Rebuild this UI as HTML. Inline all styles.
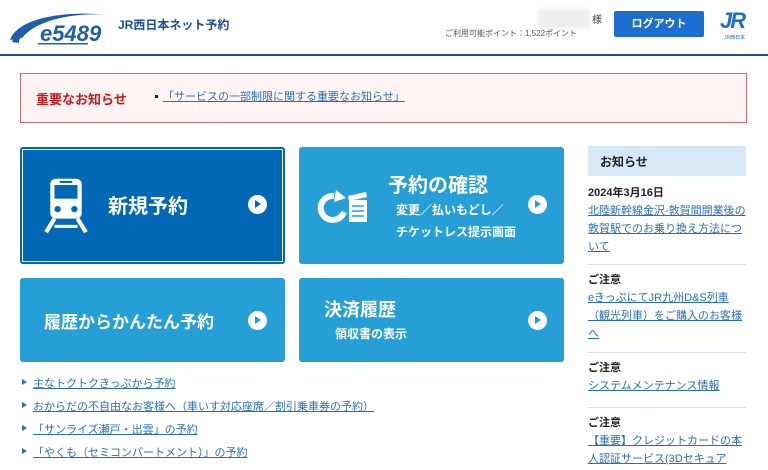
<!DOCTYPE html>
<html><head><meta charset="utf-8"><style>
*{margin:0;padding:0;box-sizing:border-box}
body{width:768px;height:470px;overflow:hidden;background:#fff;font-family:"Liberation Sans","Noto Sans CJK JP",sans-serif;position:relative;color:#222}
.a{position:absolute}
a{color:#2a6fb8;text-decoration:underline}
.btn{position:absolute;border-radius:3px;color:#fff;font-weight:bold}
.play{position:absolute;width:19px;height:19px;border-radius:50%;background:#fff}
.play:after{content:"";position:absolute;left:7px;top:5px;border-left:6px solid #259fd5;border-top:4.5px solid transparent;border-bottom:4.5px solid transparent}
.play.d:after{border-left-color:#0068b7}
.lk{position:absolute;left:22px;font-size:11px}
.lk:before{content:"";position:absolute;left:0;top:4px;border-left:5px solid #2a6fb8;border-top:3.5px solid transparent;border-bottom:3.5px solid transparent}
.lk a{margin-left:11px}
.sd{position:absolute;left:588px;width:160px;font-size:11px;line-height:18px}
.sd b{display:block;font-size:11px;color:#222}
.hr{position:absolute;left:588px;width:158px;height:1px;background:#ddd}
</style></head><body>
<svg class="a" style="left:8px;top:8px" width="110" height="38" viewBox="0 0 110 38">
<path d="M2 32 C10 10 55 2 104 7 C72 4 30 10 14 30 Z" fill="#1d5fae"/>
<path d="M4 34 C8 22 20 16 32 13 C18 20 11 28 11 35 Z" fill="#1d5fae"/>
<text x="32" y="33" font-family="Liberation Sans" font-style="italic" font-weight="bold" font-size="22" fill="#1d5fae">e5489</text>
<rect x="30" y="35" width="50" height="1.5" fill="#1d5fae"/>
</svg>
<div class="a" style="left:118px;top:16px;font-size:12px;color:#1d4f9a;font-weight:bold">JR西日本ネット予約</div>
<div class="a" style="left:538px;top:9px;width:52px;height:20px;background:#eee;filter:blur(2px)"></div>
<div class="a" style="left:592px;top:11px;font-size:10px;color:#444">様</div>
<div class="a" style="left:445px;top:28px;font-size:8px;color:#555">ご利用可能ポイント：1,522ポイント</div>
<div class="a" style="left:614px;top:11px;width:90px;height:26px;background:#1c6fd0;border-radius:2px;color:#fff;font-size:11px;font-weight:bold;text-align:center;line-height:26px">ログアウト</div>
<div class="a" style="left:720px;top:8px;font-size:22px;font-weight:bold;color:#1d6fc4;font-style:italic;letter-spacing:-2px">JR</div>
<div class="a" style="left:724px;top:34px;font-size:5px;color:#1d6fc4">JR西日本</div>
<div class="a" style="left:0;top:54px;width:768px;height:2px;background:#1f4c91"></div>
<div class="a" style="left:20px;top:73px;width:727px;height:50px;background:#fdf4f3;border:1px solid #d46a6a"></div>
<div class="a" style="left:36px;top:89px;font-size:13px;font-weight:bold;color:#c81a1a">重要なお知らせ</div>
<div class="a" style="left:155px;top:95px;width:3px;height:3px;background:#222"></div>
<div class="a" style="left:163px;top:88px;font-size:11px"><a>「サービスの一部制限に関する重要なお知らせ」</a></div>

<div class="btn" style="left:20px;top:147px;width:265px;height:117px;background:#0068b7;box-shadow:inset 0 0 0 2px #0068b7,inset 0 0 0 3px #fff"></div>
<svg class="a" style="left:44px;top:178px" width="44" height="56" viewBox="0 0 42 52"><rect x="6" y="0" width="30" height="38" rx="5" fill="#fff"/><rect x="10" y="6" width="22" height="13" fill="#0068b7"/><rect x="15" y="2" width="12" height="2" fill="#0068b7"/><circle cx="13" cy="29" r="3" fill="#0068b7"/><circle cx="29" cy="29" r="3" fill="#0068b7"/><path d="M10 38 L2 51 M32 38 L40 51" stroke="#fff" stroke-width="4"/><rect x="10" y="44" width="22" height="3" fill="#fff"/></svg>
<div class="a" style="left:108px;top:190px;font-size:20px;font-weight:bold;color:#fff">新規予約</div>
<div class="play d" style="left:248px;top:195px"></div>

<div class="btn" style="left:299px;top:147px;width:265px;height:117px;background:#259fd5"></div>
<svg class="a" style="left:316px;top:190px" width="55" height="36" viewBox="0 0 55 36"><path d="M18 6 A12 12 0 1 0 28 22" stroke="#fff" stroke-width="6" fill="none"/><path d="M20 0 L30 8 L18 12 Z" fill="#fff"/><rect x="33" y="10" width="18" height="22" fill="#fff"/><path d="M32 6 L50 2 L51 7 L33 11 Z" fill="#fff"/><path d="M36 16h12M36 21h12M36 26h12" stroke="#259fd5" stroke-width="1.5"/></svg>
<div class="a" style="left:388px;top:169px;font-size:20px;font-weight:bold;color:#fff">予約の確認</div>
<div class="a" style="left:396px;top:201px;font-size:12px;font-weight:bold;color:#fff">変更／払いもどし／</div>
<div class="a" style="left:396px;top:223px;font-size:12px;font-weight:bold;color:#fff">チケットレス提示画面</div>
<div class="play" style="left:528px;top:195px"></div>

<div class="btn" style="left:20px;top:278px;width:265px;height:84px;background:#259fd5"></div>
<div class="a" style="left:44px;top:308px;font-size:17px;font-weight:bold;color:#fff">履歴からかんたん予約</div>
<div class="play" style="left:248px;top:311px"></div>
<div class="btn" style="left:299px;top:278px;width:265px;height:84px;background:#259fd5"></div>
<div class="a" style="left:324px;top:296px;font-size:18px;font-weight:bold;color:#fff">決済履歴</div>
<div class="a" style="left:335px;top:325px;font-size:12px;font-weight:bold;color:#fff">領収書の表示</div>
<div class="play" style="left:528px;top:311px"></div>

<div class="lk" style="top:375px"><a>主なトクトクきっぷから予約</a></div>
<div class="lk" style="top:398px"><a>おからだの不自由なお客様へ（車いす対応座席／割引乗車券の予約）</a></div>
<div class="lk" style="top:421px"><a>「サンライズ瀬戸・出雲」の予約</a></div>
<div class="lk" style="top:444px"><a>「やくも（セミコンパートメント）」の予約</a></div>

<div class="a" style="left:588px;top:146px;width:158px;height:30px;background:#d7e9f7;padding:7px 0 0 12px;font-size:12px;font-weight:bold">お知らせ</div>
<div class="sd" style="top:184px"><b>2024年3月16日</b><a>北陸新幹線金沢-敦賀間開業後の敦賀駅でのお乗り換え方法について</a></div>
<div class="hr" style="top:264px"></div>
<div class="sd" style="top:271px"><b>ご注意</b><a>eきっぷにてJR九州D&amp;S列車（観光列車）をご購入のお客様へ</a></div>
<div class="hr" style="top:352px"></div>
<div class="sd" style="top:359px"><b>ご注意</b><a>システムメンテナンス情報</a></div>
<div class="hr" style="top:407px"></div>
<div class="sd" style="top:414px"><b>ご注意</b><a>【重要】クレジットカードの本人認証サービス(3Dセキュア</a></div>
</body></html>
